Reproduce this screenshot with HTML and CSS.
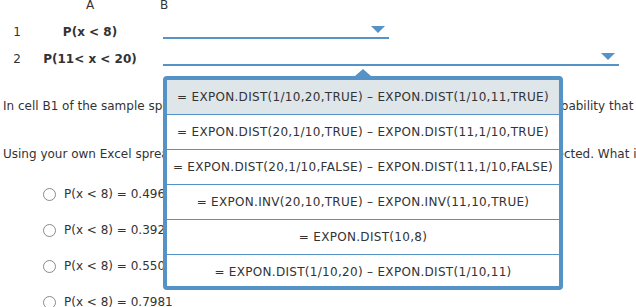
FILE: index.html
```html
<!DOCTYPE html>
<html>
<head>
<meta charset="utf-8">
<link rel="stylesheet" href="styles.css">
</head>
<body>
<div class="page">
  <div class="sheet">
    <div class="srow">
      <div class="num"></div>
      <div class="cella">A</div>
      <div class="cellb hdr">B</div>
    </div>
    <div class="srow">
      <div class="num">1</div>
      <div class="cella bold">P(x &lt; 8)</div>
      <div class="cellb"><div class="dd dd1"><span class="caret"></span></div></div>
    </div>
    <div class="srow">
      <div class="num">2</div>
      <div class="cella bold">P(11&lt; x &lt; 20)</div>
      <div class="cellb"><div class="dd dd2"><span class="caret"></span></div></div>
    </div>
  </div>

  <p class="para p1">In cell B1 of the sample spreadsheet, which Excel formula should you enter to obtain the probability that x is</p>
  <p class="para p2">Using your own Excel spreadsheet, note the probability that x &lt; 8 using the formula you selected. What is it?</p>

  <ul class="opts">
    <li class="opt"><span class="radio"></span><span>P(x &lt; 8) = 0.4966</span></li>
    <li class="opt"><span class="radio"></span><span>P(x &lt; 8) = 0.3929</span></li>
    <li class="opt"><span class="radio"></span><span>P(x &lt; 8) = 0.5507</span></li>
    <li class="opt"><span class="radio"></span><span>P(x &lt; 8) = 0.7981</span></li>
  </ul>

  <div class="popup">
    <span class="arrow"></span>
    <div class="list">
      <div class="item active">= EXPON.DIST(1/10,20,TRUE) – EXPON.DIST(1/10,11,TRUE)</div>
      <div class="item">= EXPON.DIST(20,1/10,TRUE) – EXPON.DIST(11,1/10,TRUE)</div>
      <div class="item">= EXPON.DIST(20,1/10,FALSE) – EXPON.DIST(11,1/10,FALSE)</div>
      <div class="item">= EXPON.INV(20,10,TRUE) – EXPON.INV(11,10,TRUE)</div>
      <div class="item">= EXPON.DIST(10,8)</div>
      <div class="item">= EXPON.DIST(1/10,20) – EXPON.DIST(1/10,11)</div>
    </div>
  </div>
</div>
</body>
</html>
```

FILE: styles.css
```css
html, body {
  margin: 0;
  padding: 0;
  background: #fff;
  overflow: hidden;
}
body {
  font-family: "DejaVu Sans", Verdana, sans-serif;
  font-size: 12px;
  color: #333;
}
.page {
  position: relative;
  width: 636px;
  height: 307px;
  overflow: hidden;
}
.sheet {
  margin-top: -8px;
}
.srow {
  display: grid;
  grid-template-columns: 34px 112px 1fr;
  height: 27px;
  line-height: 27px;
}
.num {
  text-align: center;
}
.cella {
  text-align: center;
  white-space: nowrap;
}
.bold {
  font-weight: bold;
}
.cellb {
  padding-left: 17px;
}
.hdr {
  padding-left: 14px;
}
.dd {
  box-sizing: border-box;
  height: 20px;
  border-bottom: 2px solid #5592c6;
  display: flex;
  justify-content: flex-end;
  align-items: flex-end;
}
.dd1 { width: 226px; }
.dd2 { width: 456px; }
.caret {
  width: 0;
  height: 0;
  border-left: 7px solid transparent;
  border-right: 7px solid transparent;
  border-top: 7px solid #5592c6;
  margin: 0 4px 4px 0;
}
.para {
  margin: 0;
  padding-left: 3px;
  white-space: nowrap;
  line-height: 16px;
}
.p1 { margin-top: 25px; }
.p2 { margin-top: 32px; }
.opts {
  list-style: none;
  margin: 14px 0 0 0;
  padding: 0 0 0 43px;
}
.opt {
  display: flex;
  align-items: center;
  gap: 8px;
  height: 36px;
  white-space: nowrap;
}
.radio {
  box-sizing: border-box;
  width: 13px;
  height: 13px;
  border: 1px solid #8a8a8a;
  border-radius: 50%;
  flex: none;
}
.popup {
  position: absolute;
  left: 163px;
  top: 76px;
  box-sizing: border-box;
  width: 400px;
  height: 214px;
  border: 4px solid #5592c6;
  border-radius: 4px;
  background: #fff;
}
.arrow {
  position: absolute;
  left: 188px;
  top: -11px;
  width: 0;
  height: 0;
  border-left: 8px solid transparent;
  border-right: 8px solid transparent;
  border-bottom: 7px solid #5592c6;
}
.list {
  height: 100%;
  overflow: hidden;
}
.item {
  box-sizing: border-box;
  height: 35px;
  line-height: 34px;
  border-bottom: 1px solid #5592c6;
  text-align: center;
  white-space: nowrap;
  letter-spacing: 0.3px;
}
.item.active {
  background: #dee6ea;
}
```
